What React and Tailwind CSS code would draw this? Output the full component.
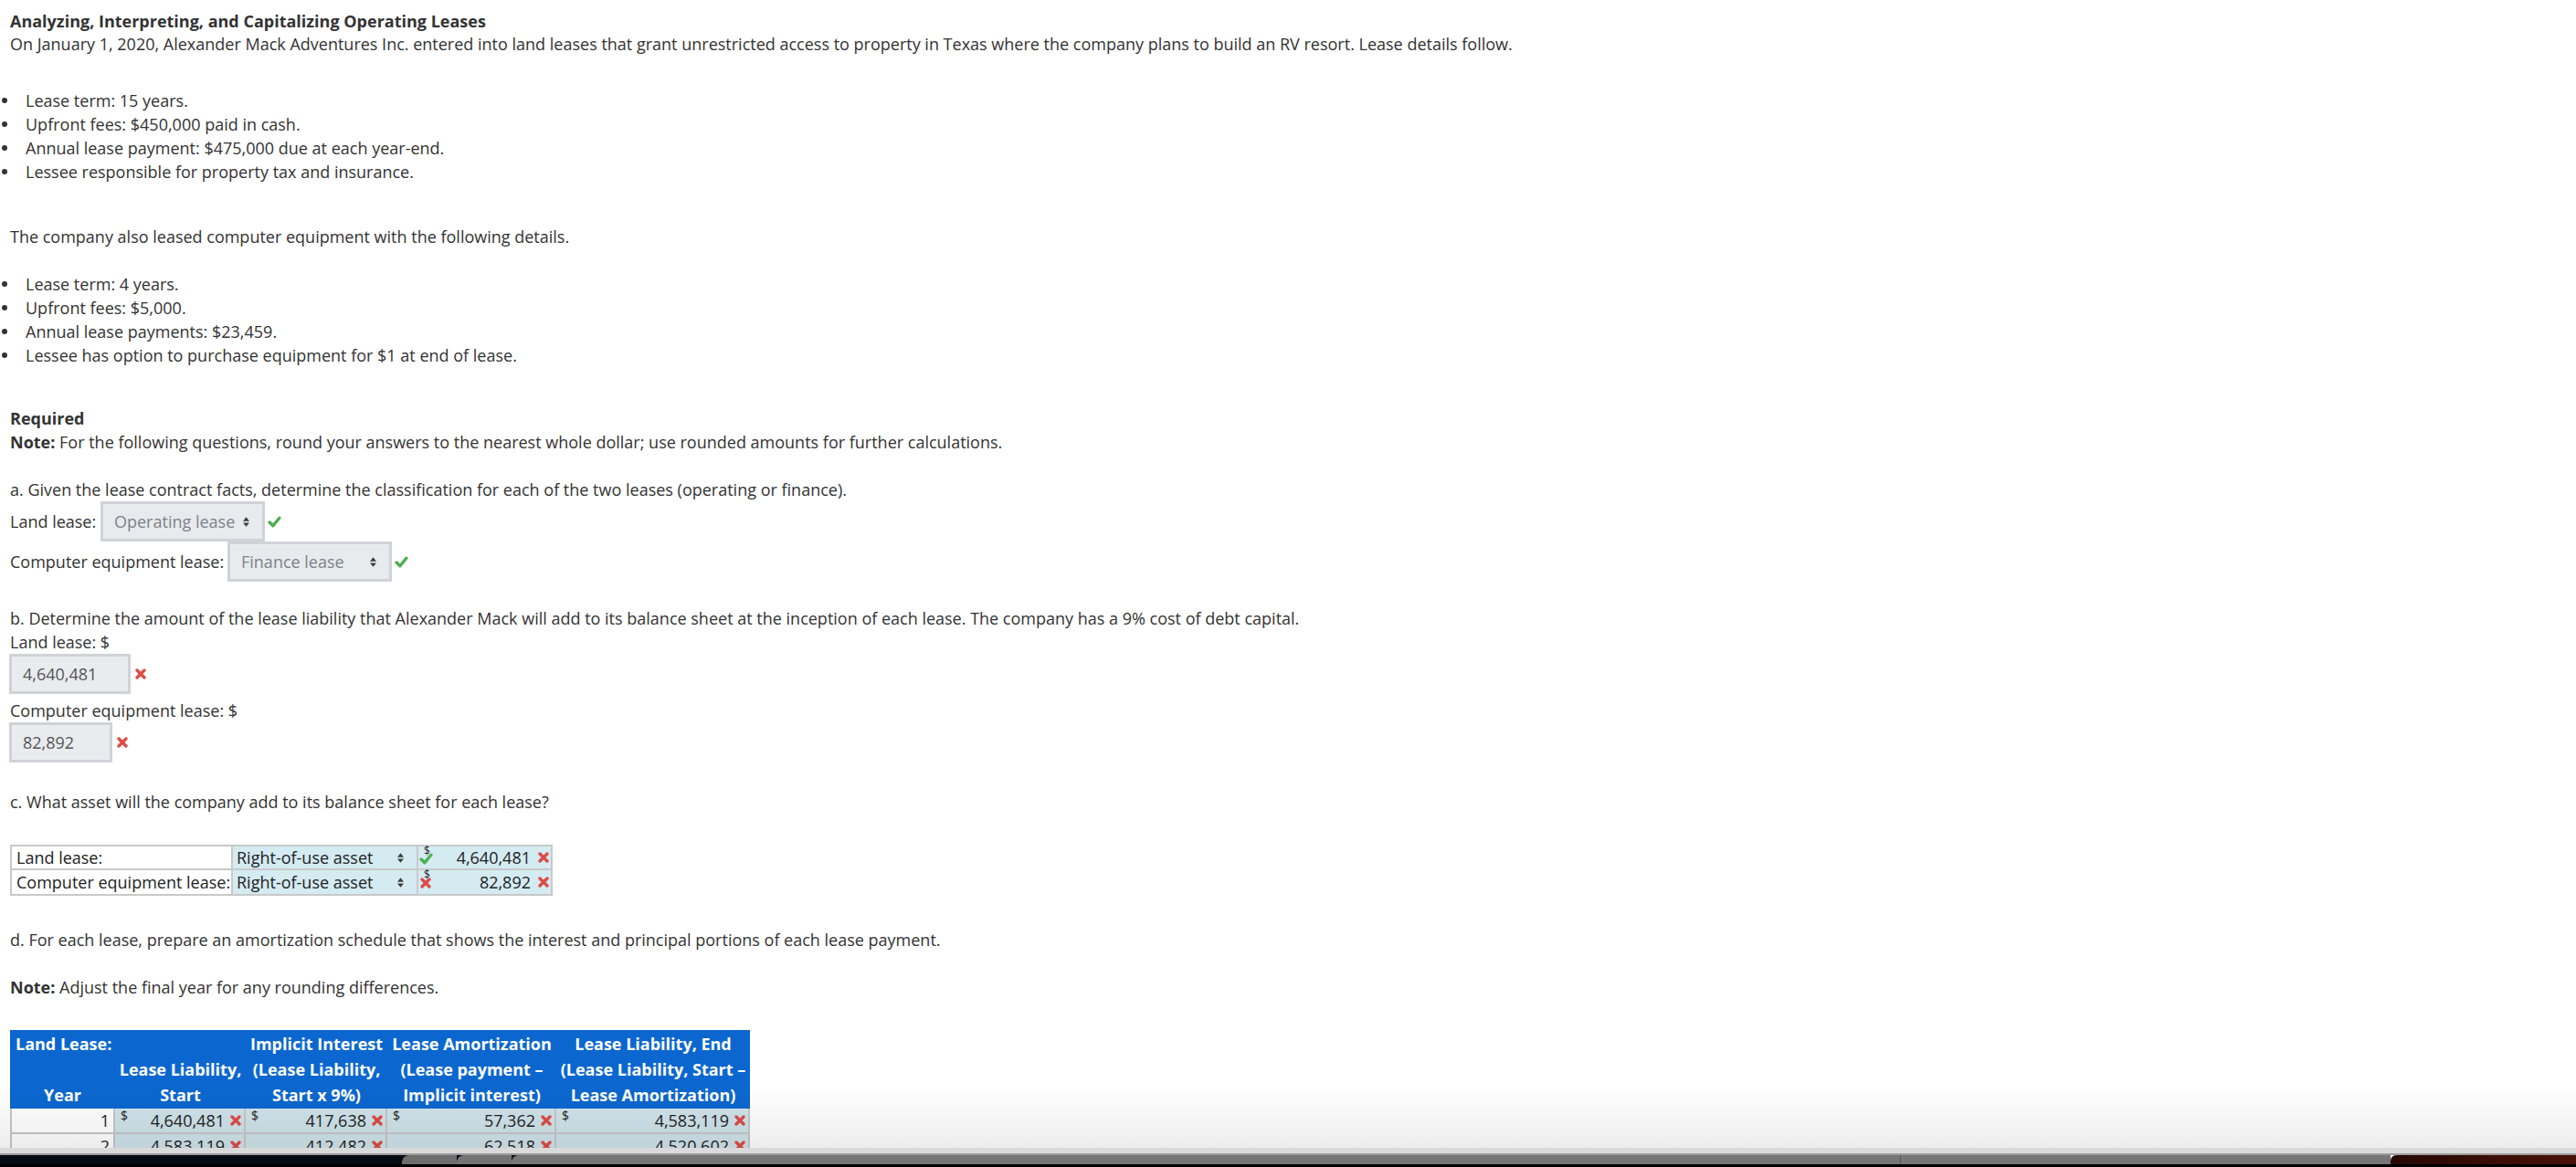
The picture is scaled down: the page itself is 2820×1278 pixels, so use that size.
import React from "react";

const Check = ({ className = "" }) => (
  <svg viewBox="0 0 14 14" className={className} fill="none" stroke="#4fae4f" strokeWidth="3.2" strokeLinecap="round" strokeLinejoin="round">
    <polyline points="2,7.5 5.5,11 12,3" />
  </svg>
);

const Cross = ({ className = "" }) => (
  <svg viewBox="0 0 12 12" className={className} fill="none" stroke="#dd4b45" strokeWidth="3.3" strokeLinecap="round">
    <path d="M2 2 L10 10 M10 2 L2 10" />
  </svg>
);

const Arrows = () => (
  <svg viewBox="0 0 8 12" className="w-[7px] h-[11px] shrink-0" fill="#3d3d3d">
    <path d="M0 5 L4 0 L8 5Z M0 7 L4 12 L8 7Z" />
  </svg>
);

const Bullets = ({ items }) => (
  <ul className="-ml-[11px]">
    {items.map((t) => (
      <li key={t} className="flex items-center">
        <span className="w-[28px] pl-[2px] flex items-center">
          <span className="block w-[6px] h-[6px] rounded-full bg-[#333]" />
        </span>
        <span>{t}</span>
      </li>
    ))}
  </ul>
);

const SelectBox = ({ value, width }) => (
  <div
    className={`flex items-center justify-between h-[44px] border-[3px] border-[#cfd3d8] bg-[#e8ebee] pl-[12px] pr-[14px] text-[#7c8289] ${width}`}
  >
    <span>{value}</span>
    <Arrows />
  </div>
);

const InputBox = ({ value, width }) => (
  <div className="flex items-center">
    <div
      className={`h-[44px] flex items-center border-[3px] border-[#cfd3d8] bg-[#e9ecef] pl-[12px] text-[#555] ${width}`}
    >
      {value}
    </div>
    <Cross className="w-[12px] h-[12px] ml-[5px]" />
  </div>
);

const headers = [
  { lines: ["Land Lease:", "", "Year"] },
  { lines: ["", "Lease Liability,", "Start"] },
  { lines: ["Implicit Interest", "(Lease Liability,", "Start x 9%)"] },
  { lines: ["Lease Amortization", "(Lease payment –", "Implicit interest)"] },
  { lines: ["Lease Liability, End", "(Lease Liability, Start –", "Lease Amortization)"] },
];

const rows = [
  { year: "1", vals: ["4,640,481", "417,638", "57,362", "4,583,119"], dollar: true },
  { year: "2", vals: ["4,583,119", "412,482", "62,518", "4,520,602"], dollar: false },
];

const colWidths = ["w-[115px]", "w-[143px]", "w-[155px]", "w-[185px]", "w-[212px]"];

export default function App() {
  return (
    <div className="relative w-[2820px] h-[1278px] overflow-hidden bg-white font-['Open_Sans',sans-serif] text-[18px] leading-[26px] text-[#333]">
      <div className="pt-[11px] pl-[11px]">
        <p className="font-bold leading-[24px]">Analyzing, Interpreting, and Capitalizing Operating Leases</p>
        <p>
          On January 1, 2020, Alexander Mack Adventures Inc. entered into land leases that grant unrestricted
          access to property in Texas where the company plans to build an RV resort. Lease details follow.
        </p>

        <div className="mt-[36px]">
          <Bullets
            items={[
              "Lease term: 15 years.",
              "Upfront fees: $450,000 paid in cash.",
              "Annual lease payment: $475,000 due at each year-end.",
              "Lessee responsible for property tax and insurance.",
            ]}
          />
        </div>

        <p className="mt-[45px]">The company also leased computer equipment with the following details.</p>

        <div className="mt-[26px]">
          <Bullets
            items={[
              "Lease term: 4 years.",
              "Upfront fees: $5,000.",
              "Annual lease payments: $23,459.",
              "Lessee has option to purchase equipment for $1 at end of lease.",
            ]}
          />
        </div>

        <p className="mt-[43px] font-bold">Required</p>
        <p>
          <span className="font-bold">Note:</span> For the following questions, round your answers to the nearest
          whole dollar; use rounded amounts for further calculations.
        </p>

        <p className="mt-[26px]">
          a. Given the lease contract facts, determine the classification for each of the two leases (operating or
          finance).
        </p>
        <div className="flex items-center">
          <span className="w-[99px]">Land lease:</span>
          <SelectBox value="Operating lease" width="w-[180px]" />
          <Check className="w-[15px] h-[15px] ml-[3px]" />
        </div>
        <div className="flex items-center">
          <span className="w-[238px]">Computer equipment lease:</span>
          <SelectBox value="Finance lease" width="w-[180px]" />
          <Check className="w-[15px] h-[15px] ml-[3px]" />
        </div>

        <p className="mt-[27px]">
          b. Determine the amount of the lease liability that Alexander Mack will add to its balance sheet at the
          inception of each lease. The company has a 9% cost of debt capital.
        </p>
        <p>Land lease: $</p>
        <div className="-ml-[1px]">
          <InputBox value="4,640,481" width="w-[133px]" />
        </div>
        <p className="mt-[5px]">Computer equipment lease: $</p>
        <div className="-ml-[1px]">
          <InputBox value="82,892" width="w-[113px]" />
        </div>

        <p className="mt-[30px]">c. What asset will the company add to its balance sheet for each lease?</p>

        <div className="mt-[34px] w-[594px] border-[2px] border-[#c9c9c9] text-[#222]">
          {[
            { label: "Land lease:", amt: "4,640,481", ok: true },
            { label: "Computer equipment lease:", amt: "82,892", ok: false },
          ].map((r, i) => (
            <div key={r.label} className={`flex h-[26px] ${i === 0 ? "border-b-[2px] border-[#c9c9c9]" : ""}`}>
              <div className="w-[242px] pl-[5px] flex items-center bg-white border-r-[2px] border-[#c9c9c9] leading-[24px]">
                {r.label}
              </div>
              <div className="w-[203px] pl-[4px] pr-[14px] flex items-center justify-between bg-[#d4ebf2] border-r-[2px] border-[#c9c9c9] leading-[24px]">
                <span>Right-of-use asset</span>
                <Arrows />
              </div>
              <div className="relative flex-1 flex items-center justify-end pr-[2px] bg-[#d4ebf2] leading-[24px]">
                <span className="absolute left-[6px] top-[-2px] text-[12px] leading-[14px]">$</span>
                {r.ok ? (
                  <Check className="absolute left-[1px] top-[6px] w-[15px] h-[15px]" />
                ) : (
                  <Cross className="absolute left-[2px] top-[8px] w-[12px] h-[12px]" />
                )}
                <span>{r.amt}</span>
                <Cross className="w-[12px] h-[12px] ml-[8px]" />
              </div>
            </div>
          ))}
        </div>

        <p className="mt-[35px]">
          d. For each lease, prepare an amortization schedule that shows the interest and principal portions of each
          lease payment.
        </p>
        <p className="mt-[26px]">
          <span className="font-bold">Note:</span> Adjust the final year for any rounding differences.
        </p>

        <div className="mt-[34px] w-[810px]">
          <div className="flex bg-[#0b67cf] text-white font-bold leading-[28px] pt-[1px] h-[86px]">
            {headers.map((h, i) => (
              <div key={i} className={`${colWidths[i]} flex flex-col`}>
                {h.lines.map((l, j) => (
                  <div
                    key={j}
                    className={`h-[28px] whitespace-nowrap ${
                      i === 0 && j === 0 ? "text-left pl-[6px]" : "text-center"
                    }`}
                  >
                    {l}
                  </div>
                ))}
              </div>
            ))}
          </div>
          {rows.map((r) => (
            <div key={r.year} className="flex h-[28px] border-b-[2px] border-[#c6c6c6] text-[#222]">
              <div className="w-[115px] bg-white border-l-[2px] border-r-[2px] border-[#c6c6c6] flex items-center justify-end pr-[4px] leading-[24px]">
                {r.year}
              </div>
              {r.vals.map((v, k) => (
                <div
                  key={k}
                  className={`${colWidths[k + 1]} relative bg-[#cfe3ea] border-r-[2px] border-[#c6c6c6] flex items-center justify-end pr-[3px] leading-[24px]`}
                >
                  {r.dollar && (
                    <span className="absolute left-[6px] top-[0px] text-[14px] leading-[16px]">$</span>
                  )}
                  <span>{v}</span>
                  <Cross className="w-[12px] h-[12px] ml-[6px]" />
                </div>
              ))}
            </div>
          ))}
        </div>
      </div>

      {/* bottom window edge / dock */}
      <div className="absolute left-0 right-0 bottom-[21px] h-[70px] bg-linear-to-b from-transparent to-black/[0.07] pointer-events-none" />
      <div className="absolute left-0 right-0 bottom-0 h-[21px] flex flex-col">
        <div className="h-[6px] bg-[#dadada]" />
        <div className="h-[2px] bg-[#9c9c9c]" />
        <div className="flex h-[10px]">
          <div className="w-[440px] bg-[#050a14]" />
          <div className="flex w-[260px] bg-[#050a14]">
            <div className="w-[60px] bg-[#6e6e6e] rounded-tl-[8px]" />
            <div className="w-[60px] bg-[#747474] rounded-tl-[8px]" />
            <div className="flex-1 bg-[#777] rounded-tl-[8px]" />
          </div>
          <div className="w-[1381px] bg-[#767676] border-r border-[#5a5a5a]" />
          <div className="flex-1 bg-[#767676]" />
          <div className="w-[203px] bg-linear-to-r from-[#260805] to-[#4a1208] rounded-tl-[6px]" />
        </div>
        <div className="h-[3px] bg-black" />
      </div>
    </div>
  );
}
